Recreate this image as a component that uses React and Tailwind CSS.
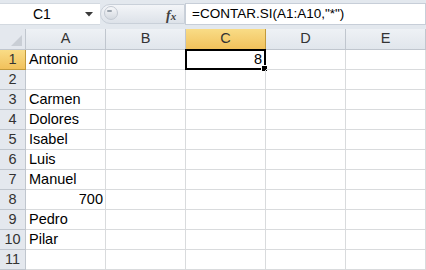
import React from "react";

const cols = ["A", "B", "C", "D", "E"];
const data = {
  1: { A: "Antonio" },
  3: { A: "Carmen" },
  4: { A: "Dolores" },
  5: { A: "Isabel" },
  6: { A: "Luis" },
  7: { A: "Manuel" },
  8: { A: "700", num: true },
  9: { A: "Pedro" },
  10: { A: "Pilar" },
};

export default function App() {
  const rows = Array.from({ length: 11 }, (_, i) => i + 1);
  return (
    <div
      className="w-[426px] h-[270px] overflow-hidden bg-white relative"
      style={{ fontFamily: '"Liberation Sans", Arial, sans-serif' }}
    >
      {/* formula bar area */}
      <div className="h-[29px] bg-[#e3e8ee] pt-[3px] flex flex-col">
        <div className="h-[22px] flex items-stretch bg-[#e3e8ee]">
          <div className="w-[100px] bg-white flex items-center relative border-y border-[#d3d9e0]">
            <span className="ml-[33px] text-[14px] text-black">C1</span>
            <svg className="absolute left-[85px] top-[8px]" width="8" height="5" viewBox="0 0 8 5">
              <path d="M0 0 H8 L4 4.5 Z" fill="#3a3a3a" />
            </svg>
          </div>
          <div className="w-[85px] relative flex items-center">
            <div className="absolute left-0 right-0 top-[1px] bottom-[1px] rounded-l-[11px] bg-gradient-to-b from-[#f3f5f8] to-[#dde2e9] border border-[#c9d0d9]" />
            <div className="absolute left-[4px] top-[3px] w-[14px] h-[14px] rounded-full bg-gradient-to-b from-[#f7f8fa] to-[#d4d9e0] border border-[#c3c9d2]" />
            <div className="absolute left-[7px] top-[7px] w-[5px] h-[2px] rounded-full bg-[#9aa3ad]" />
            <span
              className="absolute left-[66px] top-[2px] text-[14px] italic font-bold text-[#404040]"
              style={{ fontFamily: '"Liberation Serif", "Times New Roman", serif' }}
            >
              f<span className="text-[11px]">x</span>
            </span>
          </div>
          <div className="flex-1 bg-white border border-[#c7ced8] flex items-center">
            <span className="ml-[6px] text-[13.5px] text-black whitespace-nowrap">=CONTAR.SI(A1:A10,"*")</span>
          </div>
        </div>
      </div>

      {/* grid */}
      <div className="grid grid-cols-[26px_80px_80px_80px_80px_80px] grid-rows-[21px]">
        {/* corner */}
        <div className="h-[21px] bg-[#e4e8ee] border-r border-b border-[#c0c6ce] relative">
          <svg className="absolute right-[3px] bottom-[3px]" width="11" height="11" viewBox="0 0 11 11">
            <path d="M11 0 V11 H0 Z" fill="#c9ced5" />
          </svg>
        </div>
        {cols.map((c) => (
          <div
            key={c}
            className={
              c === "C"
                ? "h-[21px] bg-gradient-to-b from-[#f9dc86] to-[#f1c15b] border-r border-b border-[#c29a3c] flex items-center justify-center text-[14.5px] text-[#333333]"
                : "h-[21px] bg-gradient-to-b from-[#eef1f5] to-[#e1e6ec] border-r border-b border-[#c0c6ce] flex items-center justify-center text-[14.5px] text-[#333333]"
            }
          >
            {c}
          </div>
        ))}
        {rows.map((r) => (
          <React.Fragment key={r}>
            <div
              className={
                r === 1
                  ? "h-[20px] bg-gradient-to-b from-[#f9dc86] to-[#f1c15b] border-r border-b border-[#c29a3c] flex items-center justify-center text-[14.5px] text-[#333333]"
                  : "h-[20px] bg-[#e4e8ee] border-r border-b border-[#c0c6ce] flex items-center justify-center text-[14.5px] text-[#333333]"
              }
            >
              {r}
            </div>
            {cols.map((c) => {
              const d = data[r];
              const val = d && d[c];
              const isSel = r === 1 && c === "C";
              return (
                <div
                  key={c}
                  className="h-[20px] border-r border-b border-[#d9dbdd] relative flex items-center text-[14.5px] text-black"
                >
                  {val && (
                    <span className={d.num ? "ml-auto mr-[2px]" : "ml-[3px]"}>{val}</span>
                  )}
                  {isSel && (
                    <>
                      <span className="ml-auto mr-[3px]">8</span>
                      <div className="absolute left-[-1px] top-[-1px] w-[81px] h-[21px] border-2 border-black" />
                      <div className="absolute right-[-3px] bottom-[-3px] w-[5px] h-[5px] bg-black border border-white box-content" />
                    </>
                  )}
                </div>
              );
            })}
          </React.Fragment>
        ))}
      </div>
    </div>
  );
}
